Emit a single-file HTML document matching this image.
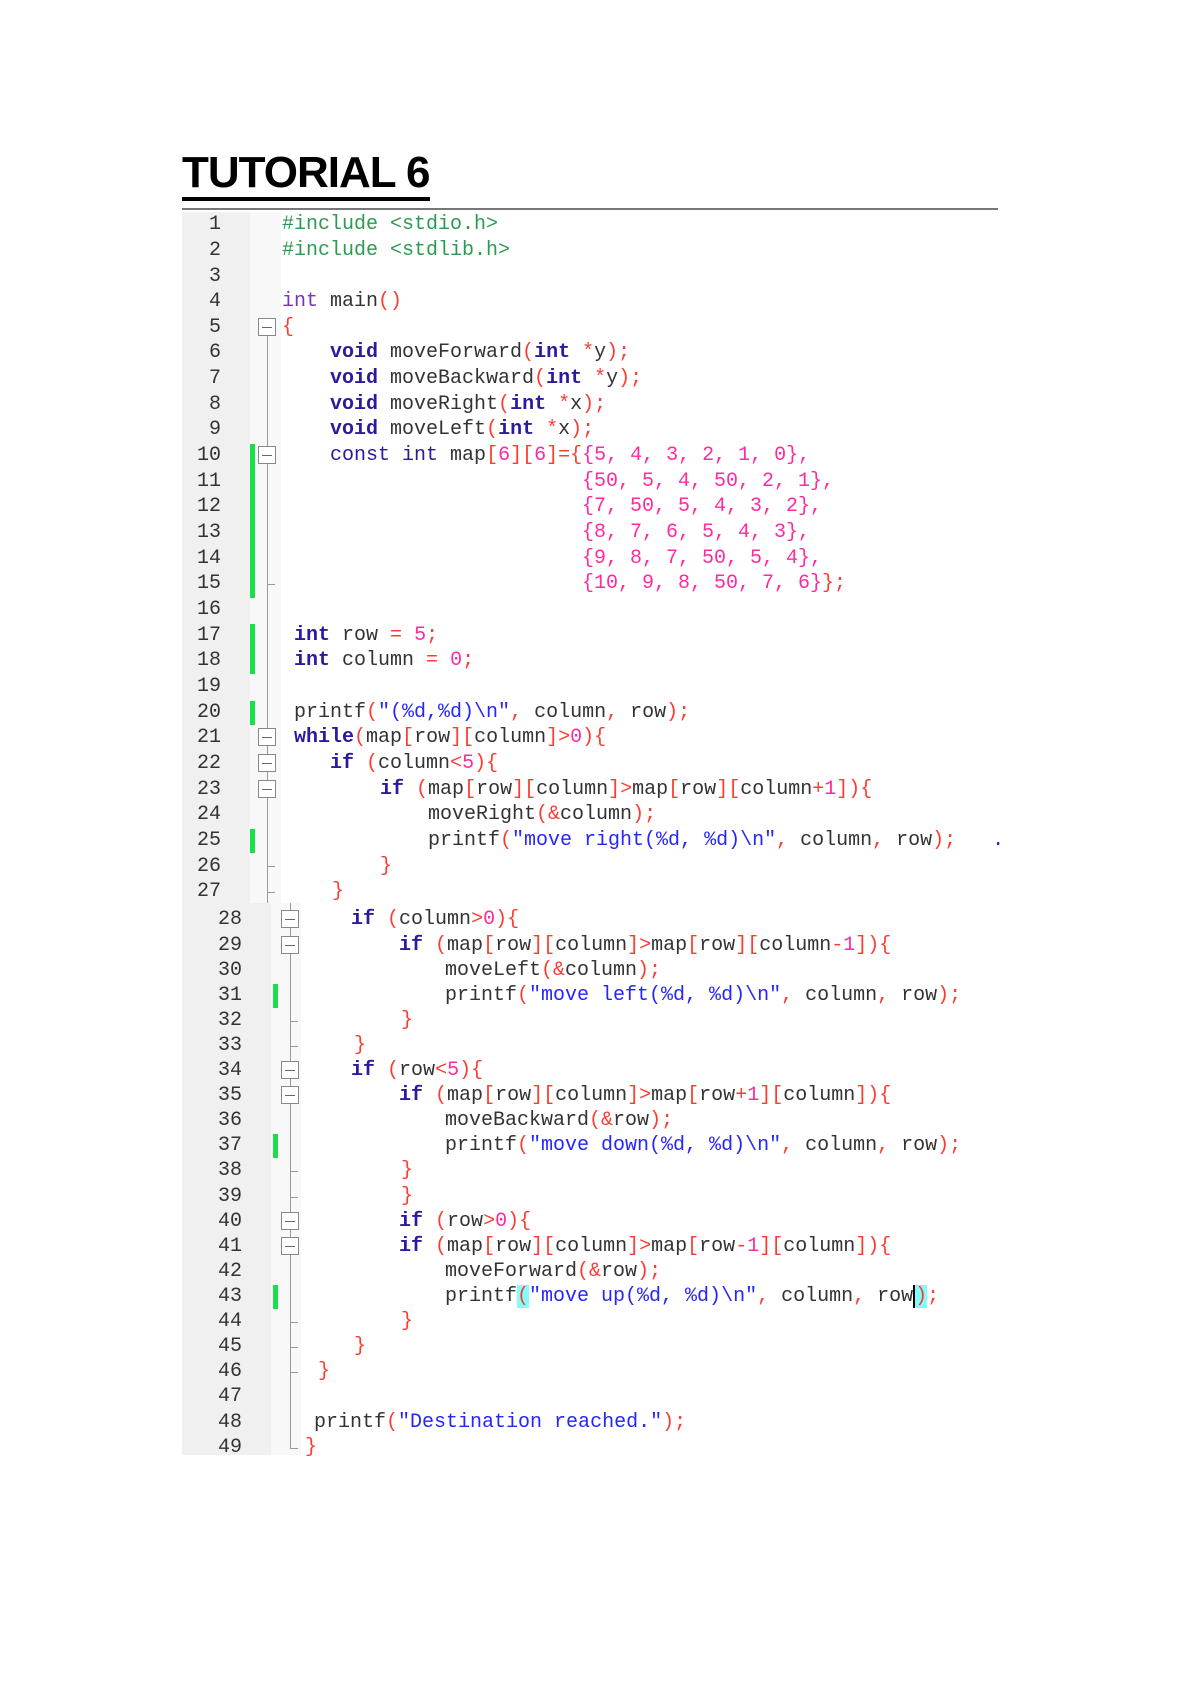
<!DOCTYPE html>
<html><head><meta charset="utf-8"><style>
body{margin:0;width:1200px;height:1698px;background:#fff;position:relative;overflow:hidden}
.t{position:absolute;left:182px;top:150px;font:bold 44px "Liberation Sans",sans-serif;color:#000;letter-spacing:-1px;border-bottom:4px solid #000;line-height:46px;padding-bottom:1px}
.rule{position:absolute;left:182px;top:208px;width:816px;height:2px;background:#777}
.g{position:absolute;background:#f0f0f0}
.m{position:absolute;background:#f8f8f8}
.l{position:absolute;font:20px/25px "Liberation Mono",monospace;white-space:pre;color:#333;letter-spacing:0}
.n{position:absolute;font:20px/25px "Liberation Mono",monospace;color:#333;text-align:right;width:40px}
k{color:#2a1aa0;font-weight:bold}
v{color:#2525ff;text-decoration:none}
u{text-decoration:none;color:#ff2aa0}
p{display:inline;margin:0;color:#ff3b30}
i{font-style:normal;color:#2c9a50}
.gb{position:absolute;background:#1adf4a;width:5px}
.fl{position:absolute;background:#999;width:1px}
.fb{position:absolute;width:16px;height:16px;border:1px solid #888;background:#fff}
.fb:after{content:"";position:absolute;left:3px;right:3px;top:8px;height:1px;background:#666}
.tk{position:absolute;height:1px;width:8px;background:#999}
.hl{background:#80ffff}
</style></head><body>
<div class="t">TUTORIAL 6</div>
<div class="rule"></div>

<div class="g" style="left:182px;top:212px;width:68px;height:691px"></div>
<div class="m" style="left:250px;top:212px;width:31px;height:691px"></div>
<div class="g" style="left:182px;top:903px;width:89px;height:552px"></div>
<div class="m" style="left:271px;top:903px;width:30px;height:552px"></div>

<div class="n" style="left:181px;top:212px">1</div>
<div class="n" style="left:181px;top:238px">2</div>
<div class="n" style="left:181px;top:264px">3</div>
<div class="n" style="left:181px;top:289px">4</div>
<div class="n" style="left:181px;top:315px">5</div>
<div class="n" style="left:181px;top:340px">6</div>
<div class="n" style="left:181px;top:366px">7</div>
<div class="n" style="left:181px;top:392px">8</div>
<div class="n" style="left:181px;top:417px">9</div>
<div class="n" style="left:181px;top:443px">10</div>
<div class="n" style="left:181px;top:469px">11</div>
<div class="n" style="left:181px;top:494px">12</div>
<div class="n" style="left:181px;top:520px">13</div>
<div class="n" style="left:181px;top:546px">14</div>
<div class="n" style="left:181px;top:571px">15</div>
<div class="n" style="left:181px;top:597px">16</div>
<div class="n" style="left:181px;top:623px">17</div>
<div class="n" style="left:181px;top:648px">18</div>
<div class="n" style="left:181px;top:674px">19</div>
<div class="n" style="left:181px;top:700px">20</div>
<div class="n" style="left:181px;top:725px">21</div>
<div class="n" style="left:181px;top:751px">22</div>
<div class="n" style="left:181px;top:777px">23</div>
<div class="n" style="left:181px;top:802px">24</div>
<div class="n" style="left:181px;top:828px">25</div>
<div class="n" style="left:181px;top:854px">26</div>
<div class="n" style="left:181px;top:879px">27</div>

<div class="n" style="left:202px;top:907px">28</div>
<div class="n" style="left:202px;top:933px">29</div>
<div class="n" style="left:202px;top:958px">30</div>
<div class="n" style="left:202px;top:983px">31</div>
<div class="n" style="left:202px;top:1008px">32</div>
<div class="n" style="left:202px;top:1033px">33</div>
<div class="n" style="left:202px;top:1058px">34</div>
<div class="n" style="left:202px;top:1083px">35</div>
<div class="n" style="left:202px;top:1108px">36</div>
<div class="n" style="left:202px;top:1133px">37</div>
<div class="n" style="left:202px;top:1158px">38</div>
<div class="n" style="left:202px;top:1184px">39</div>
<div class="n" style="left:202px;top:1209px">40</div>
<div class="n" style="left:202px;top:1234px">41</div>
<div class="n" style="left:202px;top:1259px">42</div>
<div class="n" style="left:202px;top:1284px">43</div>
<div class="n" style="left:202px;top:1309px">44</div>
<div class="n" style="left:202px;top:1334px">45</div>
<div class="n" style="left:202px;top:1359px">46</div>
<div class="n" style="left:202px;top:1384px">47</div>
<div class="n" style="left:202px;top:1410px">48</div>
<div class="n" style="left:202px;top:1435px">49</div>

<div class="gb" style="left:250px;top:444px;height:154px"></div>
<div class="gb" style="left:250px;top:624px;height:50px"></div>
<div class="gb" style="left:250px;top:701px;height:24px"></div>
<div class="gb" style="left:250px;top:829px;height:24px"></div>
<div class="gb" style="left:273px;top:984px;height:24px"></div>
<div class="gb" style="left:273px;top:1134px;height:24px"></div>
<div class="gb" style="left:273px;top:1285px;height:24px"></div>

<div class="fl" style="left:267px;top:336px;height:567px"></div>
<div class="tk" style="left:267px;top:584px"></div>
<div class="tk" style="left:267px;top:866px"></div>
<div class="tk" style="left:267px;top:892px"></div>
<div class="fb" style="left:258px;top:318px"></div>
<div class="fb" style="left:258px;top:446px"></div>
<div class="fb" style="left:258px;top:728px"></div>
<div class="fb" style="left:258px;top:754px"></div>
<div class="fb" style="left:258px;top:780px"></div>
<div class="fl" style="left:290px;top:903px;height:545px"></div>
<div class="tk" style="left:290px;top:1021px"></div>
<div class="tk" style="left:290px;top:1046px"></div>
<div class="tk" style="left:290px;top:1171px"></div>
<div class="tk" style="left:290px;top:1197px"></div>
<div class="tk" style="left:290px;top:1322px"></div>
<div class="tk" style="left:290px;top:1347px"></div>
<div class="tk" style="left:290px;top:1372px"></div>
<div class="tk" style="left:290px;top:1448px"></div>
<div class="fb" style="left:281px;top:910px"></div>
<div class="fb" style="left:281px;top:936px"></div>
<div class="fb" style="left:281px;top:1061px"></div>
<div class="fb" style="left:281px;top:1086px"></div>
<div class="fb" style="left:281px;top:1212px"></div>
<div class="fb" style="left:281px;top:1237px"></div>

<div class="l" style="left:282px;top:212px"><i>#include &lt;stdio.h&gt;</i></div>
<div class="l" style="left:282px;top:238px"><i>#include &lt;stdlib.h&gt;</i></div>
<div class="l" style="left:282px;top:289px"><k style="font-weight:normal;color:#7a30c0">int</k> main<p>()</p></div>
<div class="l" style="left:282px;top:315px"><p>{</p></div>
<div class="l" style="left:330px;top:340px"><k>void</k> moveForward<p>(</p><k>int</k> <p>*</p>y<p>);</p></div>
<div class="l" style="left:330px;top:366px"><k>void</k> moveBackward<p>(</p><k>int</k> <p>*</p>y<p>);</p></div>
<div class="l" style="left:330px;top:392px"><k>void</k> moveRight<p>(</p><k>int</k> <p>*</p>x<p>);</p></div>
<div class="l" style="left:330px;top:417px"><k>void</k> moveLeft<p>(</p><k>int</k> <p>*</p>x<p>);</p></div>
<div class="l" style="left:330px;top:443px"><k style="font-weight:normal">const</k> <k style="font-weight:normal">int</k> map<p>[</p><u>6</u><p>][</p><u>6</u><p>]={</p><u>{5, 4, 3, 2, 1, 0},</u></div>
<div class="l" style="left:582px;top:469px"><u>{50, 5, 4, 50, 2, 1},</u></div>
<div class="l" style="left:582px;top:494px"><u>{7, 50, 5, 4, 3, 2},</u></div>
<div class="l" style="left:582px;top:520px"><u>{8, 7, 6, 5, 4, 3},</u></div>
<div class="l" style="left:582px;top:546px"><u>{9, 8, 7, 50, 5, 4},</u></div>
<div class="l" style="left:582px;top:571px"><u>{10, 9, 8, 50, 7, 6}</u><p>};</p></div>
<div class="l" style="left:294px;top:623px"><k>int</k> row <p>=</p> <u>5</u><p>;</p></div>
<div class="l" style="left:294px;top:648px"><k>int</k> column <p>=</p> <u>0</u><p>;</p></div>
<div class="l" style="left:294px;top:700px">printf<p>(</p><v>"(%d,%d)\n"</v><p>,</p> column<p>,</p> row<p>);</p></div>
<div class="l" style="left:294px;top:725px"><k>while</k><p>(</p>map<p>[</p>row<p>][</p>column<p>]&gt;</p><u>0</u><p>){</p></div>
<div class="l" style="left:330px;top:751px"><k>if</k> <p>(</p>column<p>&lt;</p><u>5</u><p>){</p></div>
<div class="l" style="left:380px;top:777px"><k>if</k> <p>(</p>map<p>[</p>row<p>][</p>column<p>]&gt;</p>map<p>[</p>row<p>][</p>column<p>+</p><u>1</u><p>]){</p></div>
<div class="l" style="left:428px;top:802px">moveRight<p>(&amp;</p>column<p>);</p></div>
<div class="l" style="left:428px;top:828px">printf<p>(</p><v>"move right(%d, %d)\n"</v><p>,</p> column<p>,</p> row<p>);</p>   <v>.</v></div>
<div class="l" style="left:380px;top:854px"><p>}</p></div>
<div class="l" style="left:332px;top:879px"><p>}</p></div>

<div class="l" style="left:351px;top:907px"><k>if</k> <p>(</p>column<p>&gt;</p><u>0</u><p>){</p></div>
<div class="l" style="left:399px;top:933px"><k>if</k> <p>(</p>map<p>[</p>row<p>][</p>column<p>]&gt;</p>map<p>[</p>row<p>][</p>column<p>-</p><u>1</u><p>]){</p></div>
<div class="l" style="left:445px;top:958px">moveLeft<p>(&amp;</p>column<p>);</p></div>
<div class="l" style="left:445px;top:983px">printf<p>(</p><v>"move left(%d, %d)\n"</v><p>,</p> column<p>,</p> row<p>);</p></div>
<div class="l" style="left:401px;top:1008px"><p>}</p></div>
<div class="l" style="left:354px;top:1033px"><p>}</p></div>
<div class="l" style="left:351px;top:1058px"><k>if</k> <p>(</p>row<p>&lt;</p><u>5</u><p>){</p></div>
<div class="l" style="left:399px;top:1083px"><k>if</k> <p>(</p>map<p>[</p>row<p>][</p>column<p>]&gt;</p>map<p>[</p>row<p>+</p><u>1</u><p>][</p>column<p>]){</p></div>
<div class="l" style="left:445px;top:1108px">moveBackward<p>(&amp;</p>row<p>);</p></div>
<div class="l" style="left:445px;top:1133px">printf<p>(</p><v>"move down(%d, %d)\n"</v><p>,</p> column<p>,</p> row<p>);</p></div>
<div class="l" style="left:401px;top:1158px"><p>}</p></div>
<div class="l" style="left:401px;top:1184px"><p>}</p></div>
<div class="l" style="left:399px;top:1209px"><k>if</k> <p>(</p>row<p>&gt;</p><u>0</u><p>){</p></div>
<div class="l" style="left:399px;top:1234px"><k>if</k> <p>(</p>map<p>[</p>row<p>][</p>column<p>]&gt;</p>map<p>[</p>row<p>-</p><u>1</u><p>][</p>column<p>]){</p></div>
<div class="l" style="left:445px;top:1259px">moveForward<p>(&amp;</p>row<p>);</p></div>
<div class="l" style="left:445px;top:1284px">printf<span class="hl" style="color:#ff3b30">(</span><v>"move up(%d, %d)\n"</v><p>,</p> column<p>,</p> row<span class="hl" style="color:#ff3b30;border-left:2px solid #000">)</span><p>;</p></div>
<div class="l" style="left:401px;top:1309px"><p>}</p></div>
<div class="l" style="left:354px;top:1334px"><p>}</p></div>
<div class="l" style="left:318px;top:1359px"><p>}</p></div>
<div class="l" style="left:314px;top:1410px">printf<p>(</p><v>"Destination reached."</v><p>);</p></div>
<div class="l" style="left:305px;top:1435px"><p>}</p></div>
</body></html>
